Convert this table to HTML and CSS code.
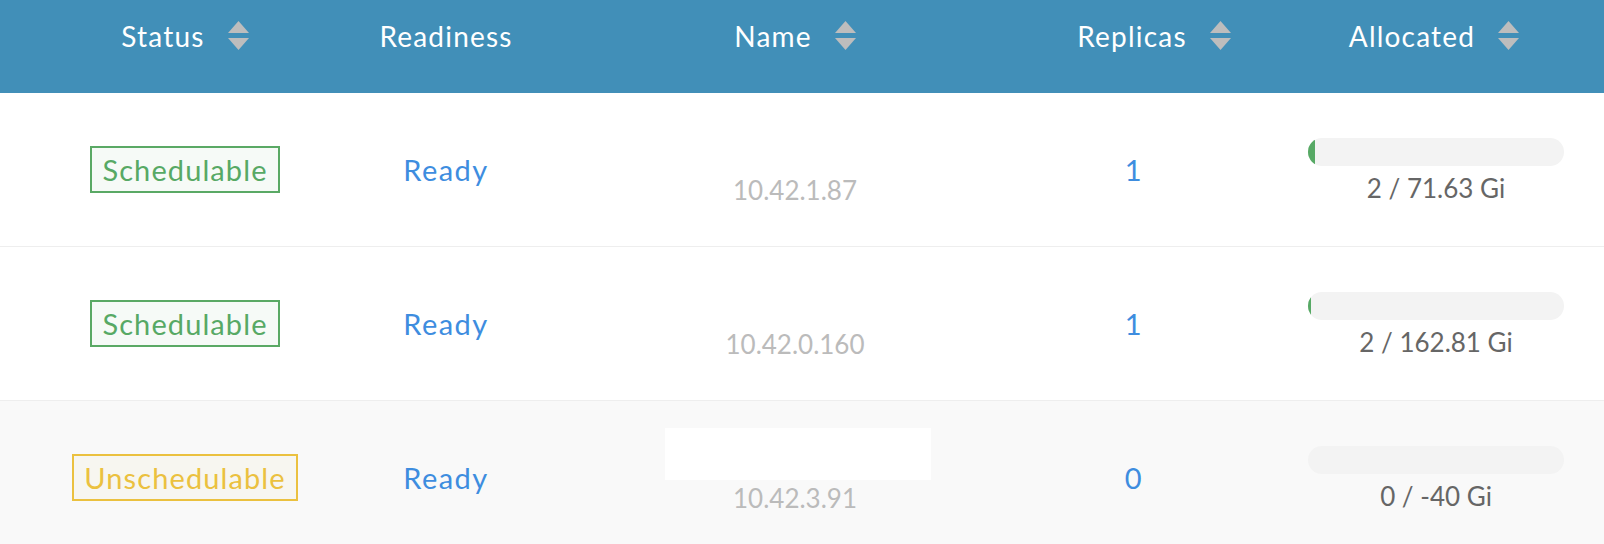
FILE: index.html
```html
<!DOCTYPE html>
<html>
<head>
<meta charset="utf-8">
<link rel="stylesheet" href="styles.css">
</head>
<body>
<div class="table">
  <div class="row head">
    <div class="cell"><span class="htext">Status</span><svg class="sort" width="21" height="29" viewBox="0 0 21 29"><polygon points="10.5,0 21,12 0,12" /><polygon points="0,17 21,17 10.5,29" /></svg></div>
    <div class="cell"><span class="htext">Readiness</span></div>
    <div class="cell"><span class="htext">Name</span><svg class="sort" width="21" height="29" viewBox="0 0 21 29"><polygon points="10.5,0 21,12 0,12" /><polygon points="0,17 21,17 10.5,29" /></svg></div>
    <div class="cell rep-h"><span class="htext">Replicas</span><svg class="sort" width="21" height="29" viewBox="0 0 21 29"><polygon points="10.5,0 21,12 0,12" /><polygon points="0,17 21,17 10.5,29" /></svg></div>
    <div class="cell"><span class="htext">Allocated</span><svg class="sort" width="21" height="29" viewBox="0 0 21 29"><polygon points="10.5,0 21,12 0,12" /><polygon points="0,17 21,17 10.5,29" /></svg></div>
  </div>

  <div class="row body">
    <div class="cell"><span class="badge ok">Schedulable</span></div>
    <div class="cell"><span class="link">Ready</span></div>
    <div class="cell name"><span class="redact"></span><span class="ip">10.42.1.87</span></div>
    <div class="cell rep"><span class="link">1</span></div>
    <div class="cell alloc"><div class="bar"><div class="fill" style="width:2.79%"></div></div><span class="amount">2 / 71.63 Gi</span></div>
  </div>

  <div class="row body">
    <div class="cell"><span class="badge ok">Schedulable</span></div>
    <div class="cell"><span class="link">Ready</span></div>
    <div class="cell name"><span class="redact"></span><span class="ip">10.42.0.160</span></div>
    <div class="cell rep"><span class="link">1</span></div>
    <div class="cell alloc"><div class="bar"><div class="fill" style="width:1.23%"></div></div><span class="amount">2 / 162.81 Gi</span></div>
  </div>

  <div class="row body alt">
    <div class="cell"><span class="badge warn">Unschedulable</span></div>
    <div class="cell"><span class="link">Ready</span></div>
    <div class="cell name"><span class="redact"></span><span class="ip">10.42.3.91</span></div>
    <div class="cell rep"><span class="link">0</span></div>
    <div class="cell alloc"><div class="bar"><div class="fill" style="width:0%"></div></div><span class="amount">0 / -40 Gi</span></div>
  </div>
</div>
</body>
</html>
```

FILE: styles.css
```css
* { box-sizing: border-box; }
html, body { margin: 0; padding: 0; background: #ffffff; }
body { font-family: Lato, "Open Sans", "DejaVu Sans", sans-serif; overflow: hidden; }

.table { width: 1604px; }

.row {
  display: grid;
  grid-template-columns: 370px 152px 546px 196px 340px;
}

.cell {
  display: flex;
  align-items: center;
  justify-content: center;
}

.head {
  height: 93px;
  background: #418fb8;
  color: #ffffff;
}
.head .cell { padding-bottom: 22px; }
.htext { font-size: 28px; line-height: 1; letter-spacing: 1.2px; }
.sort { margin-left: 23px; fill: #bdbdbd; }
.rep-h { padding-right: 24px; }

.body {
  height: 154px;
  border-bottom: 1px solid #eeeeee;
  background: #ffffff;
}
.body.alt { background: #f9f9f9; }

.badge {
  font-size: 29px;
  line-height: 43px;
  padding: 0 10px;
  border: 2px solid;
  letter-spacing: 1.1px;
}
.badge.ok { color: #57a965; border-color: #5aa965; background: #f6faf7; }
.badge.warn { color: #ebc13f; border-color: #ebc13f; background: #f7f6f0; }

.link { color: #3e8ddf; font-size: 29px; letter-spacing: 1.5px; }

.name { flex-direction: column; padding-bottom: 14px; }
.redact { display: block; width: 266px; height: 52px; background: #ffffff; margin-left: 6px; }
.ip { color: #bbbbbb; font-size: 26px; line-height: 32px; margin-top: 2px; }

.rep { padding-right: 64px; }

.alloc { flex-direction: column; padding-top: 3px; padding-left: 4px; }
.bar {
  width: 256px;
  height: 28px;
  border-radius: 14px;
  background: #f3f3f3;
  overflow: hidden;
}
.fill { height: 100%; background: #57a965; }
.amount { color: #666666; font-size: 26px; line-height: 32px; margin-top: 6px; }
```
